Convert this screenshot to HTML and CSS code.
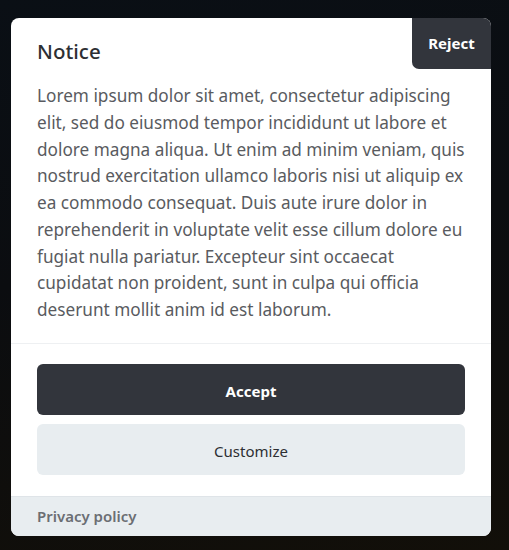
FILE: index.html
```html
<!DOCTYPE html>
<html>
<head>
<meta charset="utf-8">
<link rel="stylesheet" href="styles.css">
</head>
<body>
<div class="card">
  <button class="reject">Reject</button>
  <div class="content">
    <h2 class="title">Notice</h2>
    <p class="text">Lorem ipsum dolor sit amet, consectetur adipiscing elit, sed do eiusmod tempor incididunt ut labore et dolore magna aliqua. Ut enim ad minim veniam, quis nostrud exercitation ullamco laboris nisi ut aliquip ex ea commodo consequat. Duis aute irure dolor in reprehenderit in voluptate velit esse cillum dolore eu fugiat nulla pariatur. Excepteur sint occaecat cupidatat non proident, sunt in culpa qui officia deserunt mollit anim id est laborum.</p>
  </div>
  <div class="actions">
    <button class="btn accept">Accept</button>
    <button class="btn customize">Customize</button>
  </div>
  <div class="footer">Privacy policy</div>
</div>
</body>
</html>
```
FILE: styles.css
```css
html, body {
  margin: 0;
  height: 100%;
}
body {
  background: linear-gradient(170deg, #0a0f15 0%, #0b0d10 45%, #120f09 100%);
  font-family: "Noto Sans", "Open Sans", sans-serif;
  padding: 18px 18px 0 11px;
  box-sizing: border-box;
}
.card {
  position: relative;
  width: 480px;
  background: #fff;
  border-radius: 8px;
  overflow: hidden;
}
.reject {
  position: absolute;
  top: 0;
  right: 0;
  width: 79px;
  height: 51px;
  border: 0;
  background: #32353c;
  color: #fff;
  font-family: inherit;
  font-weight: 700;
  font-size: 15px;
  border-radius: 0 0 0 7px;
  padding: 0 0 2px;
}
.content {
  padding: 19px 26px 19px;
  border-bottom: 1px solid #eef0f2;
}
.title {
  margin: 0 0 18px;
  font-size: 20.5px;
  font-weight: 500;
  color: #2d2f33;
  line-height: 28px;
}
.text {
  margin: 0;
  font-size: 17.2px;
  line-height: 26.75px;
  color: #595b60;
}
.actions {
  display: flex;
  flex-direction: column;
  gap: 9px;
  padding: 20px 26px 21px;
}
.btn {
  height: 51px;
  border: 0;
  border-radius: 6px;
  font-family: inherit;
  font-size: 15px;
  padding: 3px 0 0;
}
.accept {
  background: #32353c;
  color: #fff;
  font-weight: 700;
}
.customize {
  background: #e8edf0;
  color: #2d2f33;
  font-weight: 400;
}
.footer {
  background: #e8edf0;
  border-top: 1px solid #dfe4e8;
  height: 39px;
  line-height: 39px;
  padding: 0 26px;
  font-size: 15px;
  font-weight: 600;
  color: #6b6e73;
}
```
